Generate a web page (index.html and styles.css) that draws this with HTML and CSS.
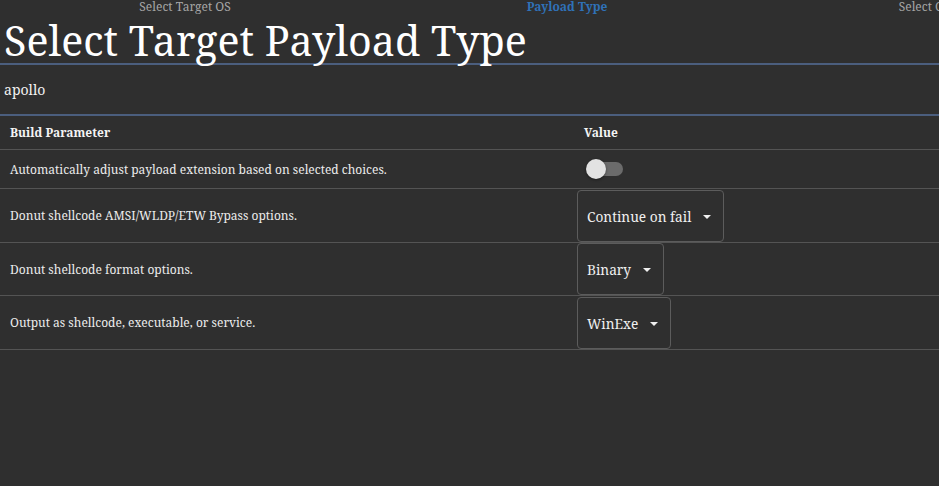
FILE: index.html
```html
<!DOCTYPE html>
<html>
<head>
<meta charset="utf-8">
<link rel="stylesheet" href="styles.css">
</head>
<body>
<div class="stepper">
  <div class="step">Select Target OS</div>
  <div class="step active">Payload Type</div>
  <div class="step">Select Commands</div>
</div>
<h1 class="title">Select Target Payload Type</h1>
<div class="payload">apollo</div>
<div class="table">
  <div class="row head">
    <div class="cell c1">Build Parameter</div>
    <div class="cell c2">Value</div>
  </div>
  <div class="row r1">
    <div class="cell c1">Automatically adjust payload extension based on selected choices.</div>
    <div class="cell c2">
      <span class="switch"><span class="track"></span><span class="thumb"></span></span>
    </div>
  </div>
  <div class="row r2">
    <div class="cell c1">Donut shellcode AMSI/WLDP/ETW Bypass options.</div>
    <div class="cell c2 sel-cell">
      <div class="select s1"><span class="sel-text">Continue on fail</span><span class="arrow"></span></div>
    </div>
  </div>
  <div class="row r3">
    <div class="cell c1">Donut shellcode format options.</div>
    <div class="cell c2 sel-cell">
      <div class="select"><span class="sel-text">Binary</span><span class="arrow"></span></div>
    </div>
  </div>
  <div class="row r4">
    <div class="cell c1">Output as shellcode, executable, or service.</div>
    <div class="cell c2 sel-cell">
      <div class="select"><span class="sel-text">WinExe</span><span class="arrow"></span></div>
    </div>
  </div>
</div>
</body>
</html>
```
FILE: styles.css
```css
html, body {
  margin: 0;
  padding: 0;
  background: #2f2f2f;
  overflow: hidden;
}
body {
  font-family: "Noto Serif", "DejaVu Serif", serif;
  color: #ececec;
  width: 939px;
  height: 486px;
}
.stepper {
  display: flex;
  margin-left: -6px;
  width: 1146px;
  height: 14px;
}
.step {
  flex: 0 0 382px;
  text-align: center;
  font-size: 12px;
  line-height: 14px;
  color: #a6a6a6;
  white-space: nowrap;
}
.step.active {
  color: #2f72b8;
  font-weight: bold;
}
.title {
  margin: 0;
  padding: 4px 0 0 4px;
  font-size: 41.2px;
  font-weight: normal;
  line-height: 45px;
  height: 45px;
  color: #ffffff;
  border-bottom: 2px solid #4b5e7e;
  white-space: nowrap;
}
.payload {
  height: 49px;
  line-height: 49px;
  padding-left: 4px;
  font-size: 14px;
  color: #f2f2f2;
  border-bottom: 2px solid #4b5e7e;
}
.table {
  display: flex;
  flex-direction: column;
}
.row {
  display: grid;
  grid-template-columns: 574px 1fr;
  align-items: center;
  border-bottom: 1px solid #545454;
}
.row.head { height: 33px; }
.row.r1 { height: 38px; }
.row.r2 { height: 53px; }
.row.r3 { height: 52px; }
.row.r4 { height: 53px; }
.cell {
  font-size: 12px;
  color: #ececec;
}
.c1 { padding-left: 10px; }
.c2 { padding-left: 10px; }
.head .cell {
  font-weight: bold;
  color: #f4f4f4;
}
.sel-cell {
  padding-left: 3px;
  align-self: stretch;
  display: flex;
  align-items: flex-end;
}
.switch {
  position: relative;
  display: block;
  width: 37px;
  height: 20px;
  margin-left: 2px;
}
.track {
  position: absolute;
  left: 3px;
  top: 3px;
  width: 34px;
  height: 14px;
  border-radius: 7px;
  background: #6b6b6b;
}
.thumb {
  position: absolute;
  left: 0;
  top: 0;
  width: 20px;
  height: 20px;
  border-radius: 50%;
  background: #e2e2e2;
  box-shadow: 0 1px 3px rgba(0,0,0,0.4);
}
.select {
  box-sizing: border-box;
  height: 52px;
  display: flex;
  align-items: center;
  padding: 0 12px 0 9px;
  border: 1px solid #5c5c5c;
  border-radius: 4px;
  font-size: 13.7px;
  color: #f0f0f0;
}
.sel-text {
  white-space: nowrap;
}
.arrow {
  width: 0;
  height: 0;
  margin-left: 12px;
  border-left: 4px solid transparent;
  border-right: 4px solid transparent;
  border-top: 4px solid #f0f0f0;
  margin-top: 1px;
}
```
